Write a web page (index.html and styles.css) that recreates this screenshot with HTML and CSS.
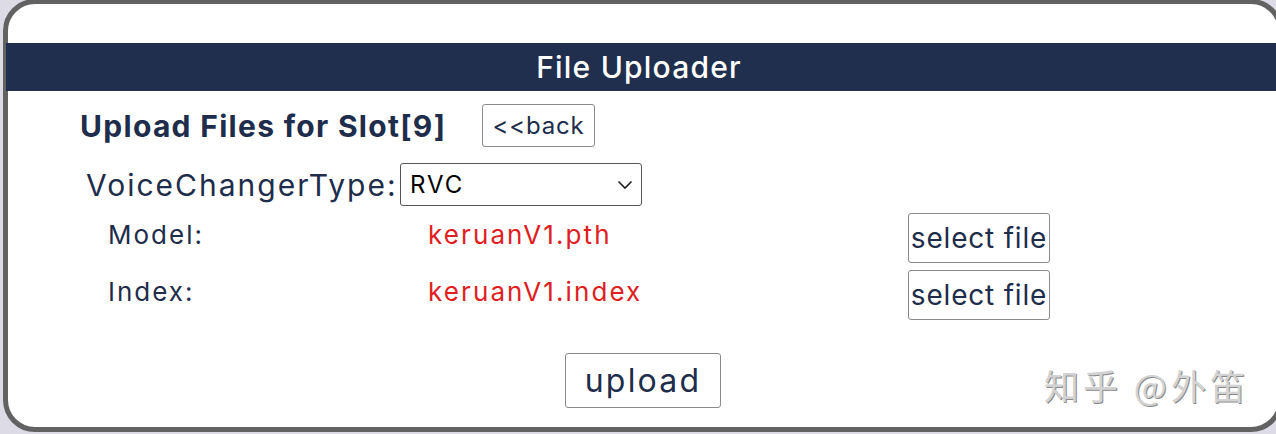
FILE: index.html
```html
<!DOCTYPE html>
<html>
<head lang="en">
    <meta charset="UTF-8">
    <title>File Uploader</title>
    <link rel="stylesheet" href="styles.css">
</head>
<body>
    <div class="modal">
        <div class="title">File Uploader</div>
        <div class="content">
            <div class="head-row">
                <h2 class="heading">Upload Files for Slot[9]</h2>
                <button class="btn back">&lt;&lt;back</button>
            </div>
            <div class="type-row">
                <span class="type-label">VoiceChangerType:</span>
                <div class="select">
                    <span>RVC</span>
                    <svg width="16" height="10" viewBox="0 0 16 10"><path d="M1.5 1.5 L8 8 L14.5 1.5" fill="none" stroke="#222" stroke-width="1.6"/></svg>
                </div>
            </div>
            <div class="file-row">
                <span class="file-label">Model:</span>
                <span class="file-name">keruanV1.pth</span>
                <button class="btn select-file">select file</button>
            </div>
            <div class="file-row">
                <span class="file-label">Index:</span>
                <span class="file-name">keruanV1.index</span>
                <button class="btn select-file">select file</button>
            </div>
            <div class="upload-row">
                <button class="btn upload">upload</button>
            </div>
        </div>
        <div class="watermark">知乎 @外笛</div>
    </div>
</body>
</html>
```

FILE: styles.css
```css
* {
    margin: 0;
    padding: 0;
    box-sizing: border-box;
}
body {
    background: #dcdbe6;
    width: 1276px;
    height: 434px;
    overflow: hidden;
    font-family: "Inter", "Noto Sans", sans-serif;
    color: #1e2d4b;
}
.modal {
    position: relative;
    width: 1280px;
    height: 433px;
    margin: -1px 0 0 3px;
    background: #fff;
    border: 5px solid #626262;
    border-radius: 32px;
    padding-top: 39px;
}
.title {
    height: 48px;
    background: #1f2f4d;
    color: #fff;
    font-size: 30px;
    font-weight: 500;
    letter-spacing: 1.2px;
    text-align: center;
    line-height: 48px;
    margin-left: -2px;
    padding-right: 6px;
}
.content {
    padding-left: 72px;
}
.btn {
    font-family: "Inter", "Noto Sans", sans-serif;
    color: #1e2d4b;
    background: #fff;
    border: 1.5px solid #8a8a8a;
    border-radius: 3px;
}
.head-row {
    display: flex;
    align-items: center;
    margin-top: 13px;
    height: 43px;
}
.heading {
    font-size: 30px;
    font-weight: 700;
    letter-spacing: 1.3px;
    width: 402px;
}
.back {
    width: 113px;
    height: 43px;
    font-size: 24px;
    letter-spacing: 0.8px;
}
.type-row {
    display: flex;
    align-items: center;
    margin-top: 16px;
    padding-left: 6px;
}
.type-label {
    font-size: 30px;
    letter-spacing: 2px;
    width: 314px;
}
.select {
    width: 242px;
    height: 43px;
    border: 1.5px solid #555;
    border-radius: 3px;
    display: flex;
    align-items: center;
    justify-content: space-between;
    padding: 0 8px 0 9px;
    font-size: 24px;
    letter-spacing: 2px;
    color: #000;
}
.file-row {
    display: grid;
    grid-template-columns: 320px 480px 142px;
    align-items: center;
    padding-left: 28px;
    margin-top: 7px;
}
.file-label {
    font-size: 26px;
    letter-spacing: 2px;
    margin-top: -8px;
}
.file-name {
    font-size: 26px;
    letter-spacing: 2.1px;
    color: #e0201e;
    margin-top: -8px;
}
.select-file {
    height: 50px;
    font-size: 28px;
    letter-spacing: 0.8px;
    padding: 0;
}
.upload-row {
    display: flex;
    padding-left: 485px;
    margin-top: 33px;
}
.upload {
    width: 156px;
    height: 55px;
    font-size: 32px;
    letter-spacing: 2.2px;
}
.watermark {
    position: absolute;
    left: 1036px;
    top: 355px;
    font-family: "Noto Sans CJK SC", sans-serif;
    font-size: 35px;
    color: #d2d2d2;
    text-shadow: 1px 1px 0 #8a8a8a;
    letter-spacing: 4px;
}
```
